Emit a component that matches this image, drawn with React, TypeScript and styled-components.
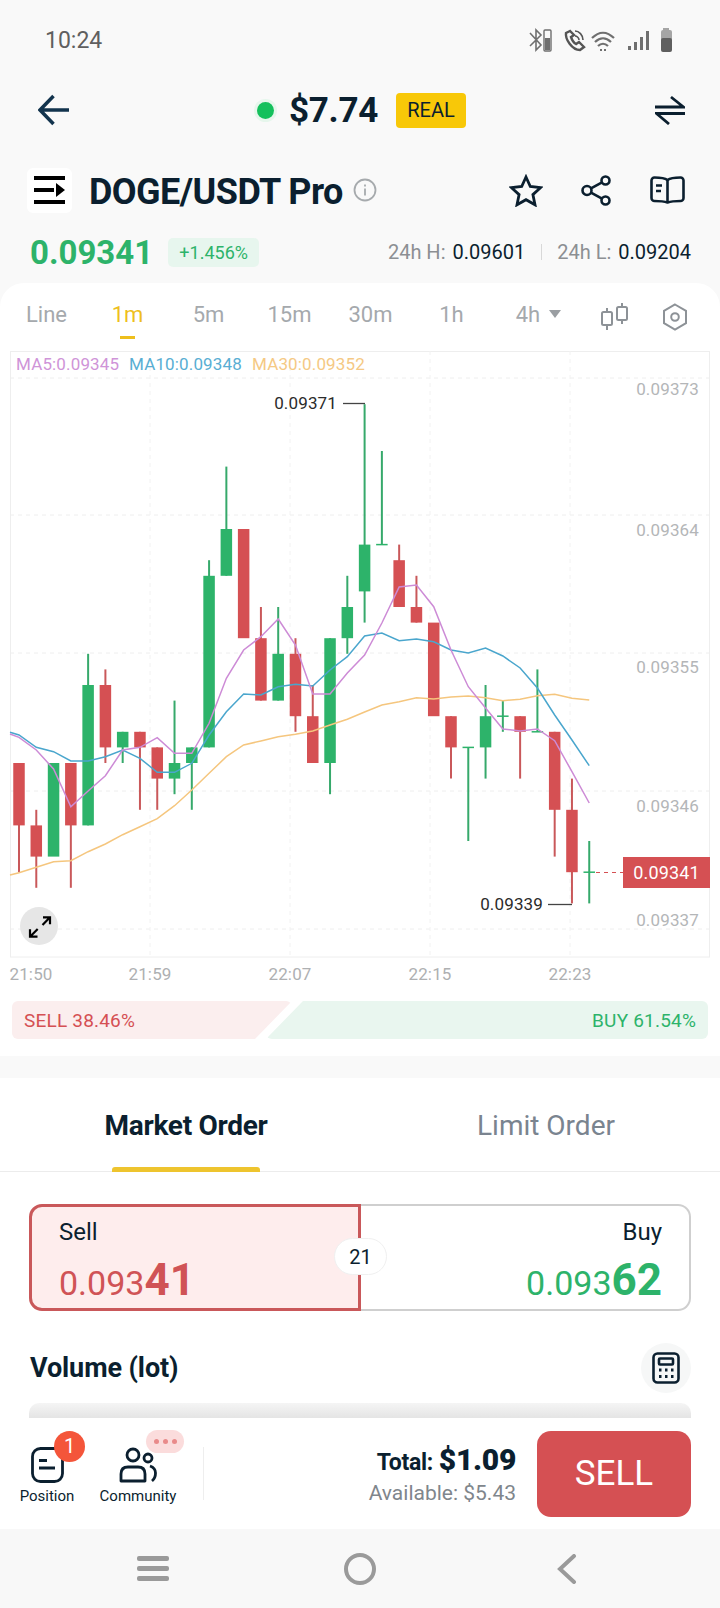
import React, { ReactElement } from 'react';
import styled, { createGlobalStyle } from 'styled-components';

const GREEN = '#2db36a';
const RED = '#d55053';
const INK = '#0b1f2f';

interface Candle {
  top: number;
  bottom: number;
  high?: number;
  low?: number;
  up: boolean;
}

const CANDLES: Candle[] = [
  { top: 9348, bottom: 9344, low: 9341, up: false },
  { top: 9344, bottom: 9342, high: 9345, low: 9340, up: false },
  { top: 9348, bottom: 9342, up: true },
  { top: 9348, bottom: 9344, low: 9340, up: false },
  { top: 9353, bottom: 9344, high: 9355, up: true },
  { top: 9353, bottom: 9349, high: 9354, low: 9348, up: false },
  { top: 9350, bottom: 9349, low: 9348, up: true },
  { top: 9350, bottom: 9349, low: 9345, up: false },
  { top: 9349, bottom: 9347, low: 9345, up: false },
  { top: 9348, bottom: 9347, high: 9352, low: 9346, up: true },
  { top: 9349, bottom: 9348, low: 9345, up: true },
  { top: 9360, bottom: 9349, high: 9361, up: true },
  { top: 9363, bottom: 9360, high: 9367, up: true },
  { top: 9363, bottom: 9356, up: false },
  { top: 9356, bottom: 9352, high: 9358, up: false },
  { top: 9355, bottom: 9352, high: 9358, up: true },
  { top: 9355, bottom: 9351, high: 9356, low: 9350, up: false },
  { top: 9351, bottom: 9348, high: 9353, up: false },
  { top: 9356, bottom: 9348, low: 9346, up: true },
  { top: 9358, bottom: 9356, high: 9360, low: 9355, up: true },
  { top: 9362, bottom: 9359, high: 9371, low: 9357, up: true },
  { top: 9362, bottom: 9362, high: 9368, up: true },
  { top: 9361, bottom: 9358, high: 9362, up: false },
  { top: 9358, bottom: 9357, high: 9360, up: false },
  { top: 9357, bottom: 9351, up: false },
  { top: 9351, bottom: 9349, low: 9347, up: false },
  { top: 9349, bottom: 9349, low: 9343, up: true },
  { top: 9351, bottom: 9349, high: 9353, low: 9347, up: true },
  { top: 9351, bottom: 9351, high: 9352, low: 9350, up: true },
  { top: 9351, bottom: 9350, low: 9347, up: false },
  { top: 9350, bottom: 9350, high: 9354, up: true },
  { top: 9350, bottom: 9345, low: 9342, up: false },
  { top: 9345, bottom: 9341, high: 9347, low: 9339, up: false },
  { top: 9341, bottom: 9341, high: 9343, low: 9339, up: true },
];

const MA5 = [737.3, 750, 769, 806.7, 791, 775.7, 750, 747.3, 737.7, 753.3, 753.3, 723.3, 678.3, 650, 636.7, 619, 645, 694, 694, 673, 655, 623, 587, 585, 606.7, 650, 686.7, 708, 729, 731, 729, 740.7, 771.7, 803];
const MA10 = [735, 747.3, 751.7, 761, 761, 756.7, 750, 758.3, 772.3, 772.3, 763.3, 735, 711.7, 694, 695, 686.7, 684.3, 686, 670, 656.7, 636, 633, 640.7, 639, 641.7, 650, 653, 648, 656, 668, 688, 715, 740, 765.7];
const MA30 = [872.7, 867.3, 861.7, 860.7, 851.7, 844, 834.7, 826.7, 818.7, 805.7, 790, 773.3, 756.7, 745, 741, 736.7, 734.3, 731, 725, 719.3, 712, 705, 701.7, 697.7, 699, 697, 696, 697.7, 700.7, 699.3, 695.7, 694.3, 698.3, 700];

const GRID_Y = [378, 515, 653, 791, 929];
const GRID_X = [150, 290, 430, 570];
const AXIS_LABELS = [
  { y: 389, text: '0.09373' },
  { y: 530, text: '0.09364' },
  { y: 667, text: '0.09355' },
  { y: 806, text: '0.09346' },
  { y: 920, text: '0.09337' },
];
const TIME_LABELS = [
  { x: 31, text: '21:50' },
  { x: 150, text: '21:59' },
  { x: 290, text: '22:07' },
  { x: 430, text: '22:15' },
  { x: 570, text: '22:23' },
];
const INTERVALS = ['Line', '1m', '5m', '15m', '30m', '1h'];

const candleX = (i: number) => 19 + 17.28 * i;
const priceY = (p: number) => 763 + 15.6 * (9348 - p);
const linePoints = (start: number, ys: number[]) =>
  `10,${start} ` + ys.map((y, i) => `${candleX(i)},${y}`).join(' ');

const GlobalStyle = createGlobalStyle`
  html, body {
    margin: 0;
    padding: 0;
    background: #f9f9f9;
  }
  * {
    box-sizing: border-box;
  }
`;

const Screen = styled.div`
  width: 720px;
  height: 1608px;
  display: flex;
  flex-direction: column;
  overflow: hidden;
  background: #f9f9f9;
  font-family: Roboto, 'Liberation Sans', sans-serif;
  color: ${INK};
`;

const Scroller = styled.div`
  flex: 1;
  min-height: 0;
  overflow: hidden;
`;

const StatusBar = styled.div`
  height: 80px;
  padding: 0 46px 0 45px;
  display: flex;
  align-items: center;
  justify-content: space-between;
`;

const Clock = styled.span`
  font-size: 23px;
  color: #5f5f5f;
`;

const Header = styled.div`
  height: 60px;
  padding: 0 35px 0 38px;
  display: flex;
  align-items: center;
  justify-content: space-between;
`;

const Balance = styled.div`
  display: flex;
  align-items: center;
  margin-right: 2px;
`;

const LiveDot = styled.span`
  width: 17px;
  height: 17px;
  border-radius: 50%;
  background: #14c05c;
  box-shadow: 0 0 0 3px #e6f6ec;
  margin-right: 15px;
`;

const BalanceValue = styled.span`
  font-size: 35px;
  font-weight: 700;
  letter-spacing: -0.3px;
`;

const RealBadge = styled.span`
  margin-left: 18px;
  width: 70px;
  height: 35px;
  border-radius: 4px;
  background: #f8c808;
  display: flex;
  align-items: center;
  justify-content: center;
  font-size: 20px;
`;

const TitleRow = styled.div`
  height: 60px;
  margin-top: 20px;
  padding: 0 35px 0 27px;
  display: flex;
  align-items: center;
`;

const MenuBox = styled.div`
  width: 45px;
  height: 45px;
  border-radius: 6px;
  background: #fff;
  display: flex;
  align-items: center;
  justify-content: center;
`;

const PairName = styled.span`
  margin-left: 17px;
  padding-top: 3px;
  font-size: 36px;
  font-weight: 700;
  letter-spacing: -0.55px;
`;

const InfoMark = styled.span`
  margin-left: 10px;
  display: flex;
`;

const TitleActions = styled.div`
  margin-left: auto;
  display: flex;
  align-items: center;
  gap: 38px;
`;

const PriceRow = styled.div`
  height: 40px;
  margin-top: 12px;
  padding: 0 29px 0 30px;
  display: flex;
  align-items: center;
`;

const LastPrice = styled.span`
  font-size: 33px;
  font-weight: 700;
  color: ${GREEN};
`;

const ChangeBadge = styled.span`
  margin-left: 15px;
  width: 91px;
  height: 29px;
  border-radius: 5px;
  background: #e7f6ee;
  color: ${GREEN};
  font-size: 18px;
  display: flex;
  align-items: center;
  justify-content: center;
`;

const Stats = styled.div`
  margin-left: auto;
  display: flex;
  align-items: center;
  font-size: 20px;
  color: #8c8f93;
`;

const StatValue = styled.b`
  margin-left: 7px;
  font-weight: 400;
  color: ${INK};
`;

const StatDivider = styled.span`
  width: 1px;
  height: 16px;
  margin: 0 15px 0 16px;
  background: #d8d8d8;
`;

const ChartPanel = styled.section`
  margin-top: 11px;
  height: 773px;
  border-radius: 24px 24px 0 0;
  background: #fff;
`;

const IntervalBar = styled.div`
  height: 68px;
  padding: 0 0 6px 6px;
  display: flex;
  align-items: center;
`;

const Interval = styled.span<{ $active?: boolean; $caret?: boolean }>`
  position: relative;
  width: 81px;
  padding-left: ${({ $caret }) => ($caret ? '12px' : '0')};
  text-align: center;
  font-size: 22px;
  color: ${({ $active }) => ($active ? '#eebf1d' : '#a5a9ad')};

  &::after {
    content: '';
    display: ${({ $active }) => ($active ? 'block' : 'none')};
    position: absolute;
    left: 33px;
    bottom: -12px;
    width: 15px;
    height: 3px;
    background: #eebf1d;
  }
`;

const DropCaret = styled.span`
  display: inline-block;
  margin-left: 9px;
  vertical-align: 4px;
  border-left: 6px solid transparent;
  border-right: 6px solid transparent;
  border-top: 8px solid #9a9ea2;
`;

const IntervalIcons = styled.div`
  margin: 5px 0 0 28px;
  display: flex;
  align-items: center;
  gap: 34px;
`;

const ChartSvg = styled.svg`
  display: block;
  width: 720px;
  height: 639px;
  font-family: Roboto, sans-serif;
  font-size: 17px;
  letter-spacing: 0.15px;
`;

const RatioBar = styled.div`
  margin-top: 11px;
  height: 38px;
  padding: 0 12px;
  display: flex;
  font-size: 19px;
  letter-spacing: 0.2px;
`;

const RatioSell = styled.div`
  width: 280px;
  padding-left: 12px;
  display: flex;
  align-items: center;
  border-radius: 6px;
  background: #fbeeee;
  color: ${RED};
  clip-path: polygon(0 0, 100% 0, 243px 100%, 0 100%);
`;

const RatioBuy = styled.div`
  flex: 1;
  margin-left: -26px;
  padding-right: 12px;
  display: flex;
  align-items: center;
  justify-content: flex-end;
  border-radius: 6px;
  background: #e9f6ef;
  color: ${GREEN};
  clip-path: polygon(37px 0, 100% 0, 100% 100%, 0 100%);
`;

const OrderSection = styled.section`
  margin-top: 22px;
  background: #fff;
  height: 340px;
  overflow: hidden;
`;

const OrderTabs = styled.div`
  height: 94px;
  display: flex;
  border-bottom: 1px solid #ececec;
`;

const OrderTab = styled.div<{ $active?: boolean }>`
  position: relative;
  width: ${({ $active }) => ($active ? '372px' : '348px')};
  padding-top: 31px;
  text-align: center;
  font-size: 28px;
  font-weight: ${({ $active }) => ($active ? 700 : 400)};
  letter-spacing: ${({ $active }) => ($active ? '-0.3px' : '0')};
  color: ${({ $active }) => ($active ? INK : '#7a848f')};

  &::after {
    content: '';
    display: ${({ $active }) => ($active ? 'block' : 'none')};
    position: absolute;
    left: 112px;
    bottom: -1px;
    width: 148px;
    height: 5px;
    border-radius: 3px 3px 0 0;
    background: #eec42e;
  }
`;

const QuoteBox = styled.div`
  position: relative;
  margin: 32px 29px 0 29px;
  height: 107px;
  display: flex;
`;

const QuoteSide = styled.div<{ $sell?: boolean }>`
  display: flex;
  flex-direction: column;
  justify-content: space-between;
  width: ${({ $sell }) => ($sell ? '332px' : '330px')};
  padding: ${({ $sell }) => ($sell ? '12px 0 3px 27px' : '13px 27px 4px 0')};
  align-items: ${({ $sell }) => ($sell ? 'flex-start' : 'flex-end')};
  background: ${({ $sell }) => ($sell ? '#feeded' : '#fff')};
  border: ${({ $sell }) => ($sell ? `3px solid #c9585a` : '2px solid #cfcfcf')};
  border-left-width: ${({ $sell }) => ($sell ? '3px' : '0')};
  border-radius: ${({ $sell }) => ($sell ? '13px 0 0 13px' : '0 13px 13px 0')};
`;

const QuoteLabel = styled.span`
  font-size: 24px;
  line-height: 27px;
`;

const QuoteValue = styled.span<{ $sell?: boolean }>`
  font-size: 34px;
  line-height: 44px;
  color: ${({ $sell }) => ($sell ? '#d05356' : GREEN)};

  b {
    font-size: 44px;
    font-weight: 700;
  }
`;

const SpreadPill = styled.span`
  position: absolute;
  left: 305px;
  top: 34px;
  width: 53px;
  height: 37px;
  border-radius: 19px;
  border: 1px solid #f0f0f0;
  background: #fff;
  display: flex;
  align-items: center;
  justify-content: center;
  font-size: 20px;
`;

const VolumeRow = styled.div`
  margin-top: 32px;
  padding: 0 29px 0 30px;
  height: 50px;
  display: flex;
  align-items: center;
  justify-content: space-between;
`;

const VolumeTitle = styled.span`
  font-size: 27px;
  font-weight: 700;
  letter-spacing: -0.1px;
`;

const CalcButton = styled.span`
  width: 50px;
  height: 50px;
  border-radius: 50%;
  background: #f6f7f7;
  display: flex;
  align-items: center;
  justify-content: center;
`;

const VolumeInput = styled.div`
  margin: 10px 29px 0;
  height: 40px;
  border-radius: 10px;
  background: linear-gradient(#f5f5f5, #e4e4e4 38%);
`;

const BottomBar = styled.div`
  height: 111px;
  padding: 0 29px 0 0;
  display: flex;
  align-items: center;
  background: #fff;
`;

const BarItem = styled.div<{ $width: number }>`
  position: relative;
  width: ${({ $width }) => $width}px;
  padding-top: 4px;
  display: flex;
  flex-direction: column;
  align-items: center;
  font-size: 15px;
  line-height: 18px;
  color: ${INK};

  svg {
    display: block;
    margin-bottom: 4px;
  }
`;

const CountBadge = styled.span`
  position: absolute;
  left: 54px;
  top: -12px;
  width: 31px;
  height: 31px;
  border-radius: 50%;
  background: #f4553a;
  color: #fff;
  font-size: 20px;
  display: flex;
  align-items: center;
  justify-content: center;
`;

const ChatBubble = styled.span`
  position: absolute;
  left: 52px;
  top: -13px;
  width: 38px;
  height: 23px;
  border-radius: 12px;
  background: #fbdcdc;
  display: flex;
  align-items: center;
  justify-content: center;
  gap: 4px;
`;

const ChatDot = styled.i`
  width: 5px;
  height: 5px;
  border-radius: 50%;
  background: #e98a8a;
`;

const BarDivider = styled.span`
  width: 1px;
  height: 53px;
  margin-left: 21px;
  background: #eeeeee;
`;

const Totals = styled.div`
  margin-left: auto;
  display: flex;
  flex-direction: column;
  align-items: flex-end;
`;

const TotalLine = styled.div`
  display: flex;
  align-items: baseline;
  gap: 6px;
  font-size: 23px;
  font-weight: 700;
  letter-spacing: -0.3px;
  line-height: 36px;

  b {
    font-size: 30px;
  }
`;

const Available = styled.span`
  font-size: 21px;
  line-height: 24px;
  color: #7f868c;
`;

const SellButton = styled.button`
  margin-left: 21px;
  width: 154px;
  height: 86px;
  border: 0;
  border-radius: 14px;
  background: ${RED};
  color: #fff;
  font-family: inherit;
  font-size: 35px;
`;

const NavBar = styled.div`
  height: 79px;
  padding-right: 6px;
  display: flex;
  align-items: center;
  justify-content: center;
  gap: 175px;
  background: #f8f8f8;
`;

function StatusIcons(): ReactElement {
  return (
    <svg width="146" height="28" viewBox="528 26 146 28" fill="#6f6f6f">
      <path d="M530 33l11 12-5 5V30l5 5-11 11" fill="none" stroke="#6f6f6f" strokeWidth="1.6" />
      <rect x="544" y="30" width="7" height="21" rx="1" fill="none" stroke="#6f6f6f" strokeWidth="1.4" />
      <rect x="545" y="38" width="5" height="12" />
      <path d="M570 31l-4 2c-1 6 6 17 14 17l4-3-5-5-3 2c-2-1-4-4-5-7l3-2z" fill="none" stroke="#555" strokeWidth="2.4" />
      <path d="M575 31c4 0 8 4 8 9M575 36c2 0 4 2 4 4" fill="none" stroke="#555" strokeWidth="1.6" />
      <path d="M592 38c7-7 15-7 22 0M595 42c5-5 11-5 16 0M598 46c3-3 7-3 10 0" fill="none" stroke="#6f6f6f" strokeWidth="2.2" />
      <path d="M600 49h2v2h-2zM604 49h2v2h-2z" />
      <rect x="628" y="46" width="3" height="4" />
      <rect x="634" y="42" width="3" height="8" />
      <rect x="640" y="37" width="3" height="13" />
      <rect x="646" y="31" width="3" height="19" />
      <rect x="663" y="28" width="6" height="3" fill="#a5a5a5" />
      <rect x="661" y="30" width="11" height="11" rx="2" fill="#a5a5a5" />
      <rect x="661" y="38" width="11" height="14" rx="2" fill="#5f5f5f" />
    </svg>
  );
}

function BookIcon(): ReactElement {
  return (
    <svg width="35" height="28" viewBox="0 0 35 28" fill="none" stroke={INK} strokeWidth="2.6">
      <path d="M17.5 4C14 1.5 9 1.500 4.500 1.500a3 3 0 0 0-3 3V22a3 3 0 0 0 3 3c5 0 9.500.3 13 1.500C21 25.300 25.500 25 30.500 25a3 3 0 0 0 3-3V4.500a3 3 0 0 0-3-3C26 1.500 21 1.500 17.500 4z" strokeLinejoin="round" />
      <path d="M17.500 4v22M6 9.500h6M6 15h5" />
    </svg>
  );
}

function ExpandGlyph(): ReactElement {
  return (
    <g>
      <circle cx="39" cy="926" r="19" fill="#e6e6e6" />
      <path d="M42.500 925l7.500-7.700M43 917.300h7v7M37.700 929l-7.700 7.700M30 929.300v7.400h7.500" fill="none" stroke="#000" strokeWidth="2.2" />
    </g>
  );
}

function CandleChart(): ReactElement {
  return (
    <ChartSvg viewBox="0 351 720 639">
      <rect x="10.500" y="351.500" width="699" height="605.500" fill="none" stroke="#eeeeee" />
      {GRID_Y.map(y => (
        <line key={y} x1="10" x2="709" y1={y} y2={y} stroke="#eeeeee" strokeDasharray="4 4" />
      ))}
      {GRID_X.map(x => (
        <line key={x} x1={x} x2={x} y1="351" y2="957" stroke="#f2f2f2" strokeDasharray="4 4" />
      ))}

      <text x="16" y="370" fill="#cf94d8">MA5:0.09345</text>
      <text x="129" y="370" fill="#59aed3">MA10:0.09348</text>
      <text x="252" y="370" fill="#f5c984">MA30:0.09352</text>

      {AXIS_LABELS.map(l => (
        <text key={l.text} x="699" y={l.y + 6} textAnchor="end" fill="#b4b6b8">
          {l.text}
        </text>
      ))}
      {TIME_LABELS.map(l => (
        <text key={l.text} x={l.x} y="980" textAnchor="middle" fill="#aeb0b2">
          {l.text}
        </text>
      ))}

      {CANDLES.map((c, i) => {
        const x = candleX(i);
        const height = priceY(c.bottom) - priceY(c.top);
        return (
          <g key={i}>
            {(c.high || c.low) && (
              <line
                x1={x}
                x2={x}
                y1={priceY(c.high ?? c.top)}
                y2={priceY(c.low ?? c.bottom)}
                stroke={c.up ? '#36a96b' : '#c9585a'}
                strokeWidth="2"
              />
            )}
            {height > 0 ? (
              <rect x={x - 5.750} y={priceY(c.top)} width="11.500" height={height} fill={c.up ? GREEN : RED} />
            ) : (
              <line x1={x - 5.750} x2={x + 5.750} y1={priceY(c.top)} y2={priceY(c.top)} stroke={GREEN} strokeWidth="1.500" />
            )}
          </g>
        );
      })}

      <polyline points={linePoints(875, MA30)} fill="none" stroke="#f5c67e" strokeWidth="1.500" />
      <polyline points={linePoints(732.300, MA10)} fill="none" stroke="#4aa6cd" strokeWidth="1.500" />
      <polyline points={linePoints(734, MA5)} fill="none" stroke="#cd8bd6" strokeWidth="1.500" />

      <line x1="343" x2="365" y1="403.500" y2="403.500" stroke="#444" strokeWidth="1.300" />
      <text x="337" y="409" textAnchor="end" fill="#2b2b2b">0.09371</text>
      <line x1="548" x2="572" y1="904.500" y2="904.500" stroke="#444" strokeWidth="1.300" />
      <text x="543" y="910" textAnchor="end" fill="#2b2b2b">0.09339</text>

      <line x1="596" x2="623" y1="872.500" y2="872.500" stroke={RED} strokeDasharray="4 4" />
      <rect x="623" y="857" width="87" height="31" fill={RED} />
      <text x="666.500" y="878.500" textAnchor="middle" fill="#fff" fontSize="18">0.09341</text>

      <ExpandGlyph />
    </ChartSvg>
  );
}

export default function App(): ReactElement {
  return (
    <Screen>
      <GlobalStyle />
      <Scroller>
        <StatusBar>
          <Clock>10:24</Clock>
          <StatusIcons />
        </StatusBar>

        <Header>
          <svg width="32" height="32" viewBox="0 0 32 32" fill="none" stroke="#12334d" strokeWidth="3.500">
            <path d="M31 16H3M15.500 2L2 16l13.500 14" />
          </svg>
          <Balance>
            <LiveDot />
            <BalanceValue>$7.74</BalanceValue>
            <RealBadge>REAL</RealBadge>
          </Balance>
          <svg width="30" height="30" viewBox="0 0 30 30" fill="none" stroke={INK} strokeWidth="2.800">
            <path d="M0 12h28.500L16 2M30 18.500H1.500L14 29" />
          </svg>
        </Header>

        <TitleRow>
          <MenuBox>
            <svg width="32" height="30" viewBox="0 0 32 30" fill="#000">
              <rect x="0" y="1" width="31" height="4" />
              <rect x="0" y="13" width="20" height="4" />
              <path d="M22 8l9 7-9 7z" />
              <rect x="0" y="25" width="31" height="4" />
            </svg>
          </MenuBox>
          <PairName>DOGE/USDT Pro</PairName>
          <InfoMark>
            <svg width="24" height="24" viewBox="0 0 24 24" fill="none" stroke="#a6aaad" strokeWidth="1.800">
              <circle cx="12" cy="12" r="10.500" />
              <path d="M12 10.500v7M12 6.500v2" />
            </svg>
          </InfoMark>
          <TitleActions>
            <svg width="34" height="33" viewBox="0 0 34 33" fill="none" stroke={INK} strokeWidth="2.800" strokeLinejoin="miter">
              <path d="M17 3l4.300 9.500 10.200 1.200-7.600 6.900 2.100 10.200L17 25.700 8 30.800l2.100-10.200-7.600-6.900 10.200-1.200z" />
            </svg>
            <svg width="31" height="31" viewBox="0 0 31 31" fill="none" stroke={INK} strokeWidth="2.600">
              <circle cx="6" cy="15.500" r="4.500" />
              <circle cx="24.500" cy="5.500" r="4" />
              <circle cx="24.500" cy="25.500" r="4" />
              <path d="M10 13.300l11-6M10 17.700l11 6" />
            </svg>
            <BookIcon />
          </TitleActions>
        </TitleRow>

        <PriceRow>
          <LastPrice>0.09341</LastPrice>
          <ChangeBadge>+1.456%</ChangeBadge>
          <Stats>
            24h H:<StatValue>0.09601</StatValue>
            <StatDivider />
            24h L:<StatValue>0.09204</StatValue>
          </Stats>
        </PriceRow>

        <ChartPanel>
          <IntervalBar>
            {INTERVALS.map(name => (
              <Interval key={name} $active={name === '1m'}>
                {name}
              </Interval>
            ))}
            <Interval $caret>
              4h
              <DropCaret />
            </Interval>
            <IntervalIcons>
              <svg width="27" height="28" viewBox="0 0 27 28" fill="none" stroke="#8d9297" strokeWidth="2">
                <rect x="1" y="9" width="10" height="13" rx="1.500" />
                <path d="M6 5v4M6 22v5" />
                <rect x="16" y="4" width="10" height="13" rx="1.500" />
                <path d="M21 0v4M21 17v4" />
              </svg>
              <svg width="26" height="28" viewBox="0 0 26 28" fill="none" stroke="#8d9297" strokeWidth="2">
                <path d="M13 1.500l11 6.300v12.400l-11 6.300-11-6.300V7.800z" />
                <circle cx="13" cy="14" r="3.800" />
              </svg>
            </IntervalIcons>
          </IntervalBar>

          <CandleChart />

          <RatioBar>
            <RatioSell>SELL 38.46%</RatioSell>
            <RatioBuy>BUY 61.54%</RatioBuy>
          </RatioBar>
        </ChartPanel>

        <OrderSection>
          <OrderTabs>
            <OrderTab $active>Market Order</OrderTab>
            <OrderTab>Limit Order</OrderTab>
          </OrderTabs>

          <QuoteBox>
            <QuoteSide $sell>
              <QuoteLabel>Sell</QuoteLabel>
              <QuoteValue $sell>
                0.093<b>41</b>
              </QuoteValue>
            </QuoteSide>
            <QuoteSide>
              <QuoteLabel>Buy</QuoteLabel>
              <QuoteValue>
                0.093<b>62</b>
              </QuoteValue>
            </QuoteSide>
            <SpreadPill>21</SpreadPill>
          </QuoteBox>

          <VolumeRow>
            <VolumeTitle>Volume (lot)</VolumeTitle>
            <CalcButton>
              <svg width="28" height="32" viewBox="0 0 28 32" fill="none" stroke={INK} strokeWidth="2.600">
                <rect x="1.500" y="1.500" width="25" height="29" rx="4" />
                <rect x="7" y="6.500" width="14" height="6" rx="1" />
                <path d="M7 18h2.500M13 18h2.500M19 18h2.500M7 24.500h2.500M13 24.500h2.500M19 24.500h2.500" strokeWidth="3" />
              </svg>
            </CalcButton>
          </VolumeRow>
          <VolumeInput />
        </OrderSection>
      </Scroller>

      <BottomBar>
        <BarItem $width={94}>
          <svg width="33" height="36" viewBox="0 0 33 36" fill="none" stroke={INK} strokeWidth="2.800">
            <rect x="1.500" y="1.500" width="30" height="33" rx="8" />
            <path d="M8 13.500h8M8 21h16" />
          </svg>
          Position
          <CountBadge>1</CountBadge>
        </BarItem>
        <BarItem $width={88}>
          <svg width="38" height="36" viewBox="0 0 38 36" fill="none" stroke={INK} strokeWidth="2.800">
            <circle cx="14" cy="8" r="6" />
            <circle cx="29" cy="11" r="4" />
            <path d="M2 34V27c0-5 3-7 7-7h10c4 0 7 2 7 7v7z" strokeLinejoin="round" />
            <path d="M31 19c3 1 5.500 3.500 5.500 7 0 3-1 6-3.500 8" />
          </svg>
          Community
          <ChatBubble>
            <ChatDot />
            <ChatDot />
            <ChatDot />
          </ChatBubble>
        </BarItem>
        <BarDivider />
        <Totals>
          <TotalLine>
            Total:<b>$1.09</b>
          </TotalLine>
          <Available>Available: $5.43</Available>
        </Totals>
        <SellButton>SELL</SellButton>
      </BottomBar>

      <NavBar>
        <svg width="32" height="25" viewBox="0 0 32 25" fill="#9a9a9a">
          <rect y="0" width="32" height="5" rx="2" />
          <rect y="10" width="32" height="5" rx="2" />
          <rect y="20" width="32" height="5" rx="2" />
        </svg>
        <svg width="32" height="32" viewBox="0 0 32 32" fill="none" stroke="#9a9a9a" strokeWidth="4">
          <circle cx="16" cy="16" r="14" />
        </svg>
        <svg width="26" height="30" viewBox="0 0 26 30" fill="none" stroke="#9a9a9a" strokeWidth="4" strokeLinecap="round">
          <path d="M23 2L9 15l14 13" />
        </svg>
      </NavBar>
    </Screen>
  );
}
